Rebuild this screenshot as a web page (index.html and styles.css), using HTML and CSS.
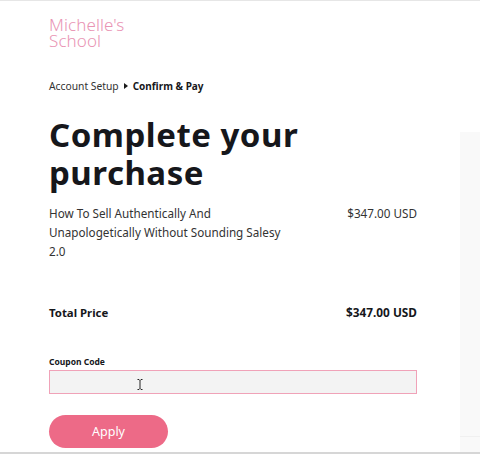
FILE: index.html
```html
<!DOCTYPE html>
<html lang="en">
<head>
<meta charset="utf-8">
<title>Checkout</title>
<link rel="stylesheet" href="styles.css">
</head>
<body>
<div class="page">
  <main class="main">
    <div class="logo"><div class="logo-line">Michelle's</div><div class="logo-line">School</div></div>
    <nav class="crumbs">
      <span class="crumb">Account Setup</span>
      <svg class="crumb-arrow" width="4" height="6" viewBox="0 0 4 6"><path d="M0 0 L4 3 L0 6 Z" fill="#1a1a1a"/></svg>
      <span class="crumb crumb-current">Confirm &amp; Pay</span>
    </nav>
    <h1 class="title">Complete your purchase</h1>
    <div class="line-item">
      <div class="item-name">How To Sell Authentically And Unapologetically Without Sounding Salesy 2.0</div>
      <div class="item-price">$347.00 USD</div>
    </div>
    <div class="total">
      <div class="total-label">Total Price</div>
      <div class="total-price">$347.00 USD</div>
    </div>
    <form class="coupon">
      <label class="coupon-label" for="coupon">Coupon Code</label>
      <div class="coupon-field">
        <input class="coupon-input" id="coupon" type="text">
        <svg class="cursor" width="6" height="11" viewBox="0 0 6 11"><path d="M0.5 0.5 H2 L3 1.5 L4 0.5 H5.5 M3 1.5 V9.5 M0.5 10.5 H2 L3 9.5 L4 10.5 H5.5" fill="none" stroke="#222" stroke-width="1"/></svg>
      </div>
      <button class="apply" type="button">Apply</button>
    </form>
  </main>
  <aside class="summary">
    <div class="summary-inner"></div>
  </aside>
</div>
</body>
</html>
```
FILE: styles.css
```css
* { box-sizing: border-box; }
html, body { margin: 0; padding: 0; background: #fff; }
body { font-family: "Noto Sans", "DejaVu Sans", sans-serif; color: #333; }

.page {
  display: flex;
  height: 454px;
  overflow: hidden;
  border-top: 1px solid #e6e6e6;
  border-bottom: 2px solid #d6d6d6;
}

.main {
  width: 460px;
  flex: none;
  padding-left: 49px;
  padding-right: 43px;
}

.logo {
  margin-top: 16px;
  font-size: 17px;
  font-weight: 300;
  color: #e994b4;
  letter-spacing: 0.1px;
}
.logo-line { height: 16px; line-height: 16px; }

.crumbs {
  display: flex;
  align-items: center;
  gap: 4px;
  margin-top: 29px;
  height: 16px;
  font-size: 10.3px;
  line-height: 16px;
}
.crumb { color: #333; }
.crumb-current { font-weight: 700; font-size: 10px; color: #16171b; }
.crumb-arrow { display: block; margin: 0 1px; }

.title {
  margin: 22px 0 0;
  font-size: 33px;
  line-height: 38px;
  font-weight: 700;
  letter-spacing: 0.5px;
  color: #16171b;
  width: 280px;
}

.line-item {
  display: flex;
  justify-content: space-between;
  align-items: flex-start;
  margin-top: 12px;
  font-size: 11.7px;
  line-height: 19px;
  color: #333;
}
.item-name { width: 234px; }
.item-price { white-space: nowrap; }

.total {
  display: flex;
  justify-content: space-between;
  margin-top: 42px;
  font-size: 11.4px;
  line-height: 19px;
  font-weight: 700;
  color: #16171b;
}
.total-price { font-size: 11.8px; }

.coupon { margin: 34px 0 0; display: flex; flex-direction: column; align-items: flex-start; }
.coupon-label {
  font-size: 8.5px;
  line-height: 12px;
  font-weight: 700;
  color: #16171b;
}
.coupon-field { position: relative; width: 100%; margin-top: 2px; }
.coupon-input {
  display: block;
  width: 100%;
  height: 24px;
  margin: 0;
  border: 1px solid #f0a2b8;
  background: #f3f3f3;
  outline: none;
  font: inherit;
}
.cursor { position: absolute; left: 88px; top: 9px; }

.apply {
  margin-top: 21px;
  width: 119px;
  height: 33px;
  border: none;
  border-radius: 17px;
  background: #ed6a87;
  color: #fff;
  font-family: inherit;
  font-size: 12.5px;
  cursor: pointer;
}

.summary {
  flex: 1;
  margin-top: 131px;
  background: #f9f9f9;
}
.summary-inner {
  height: 305px;
  border-bottom: 1px solid #f0f0f0;
}
```
